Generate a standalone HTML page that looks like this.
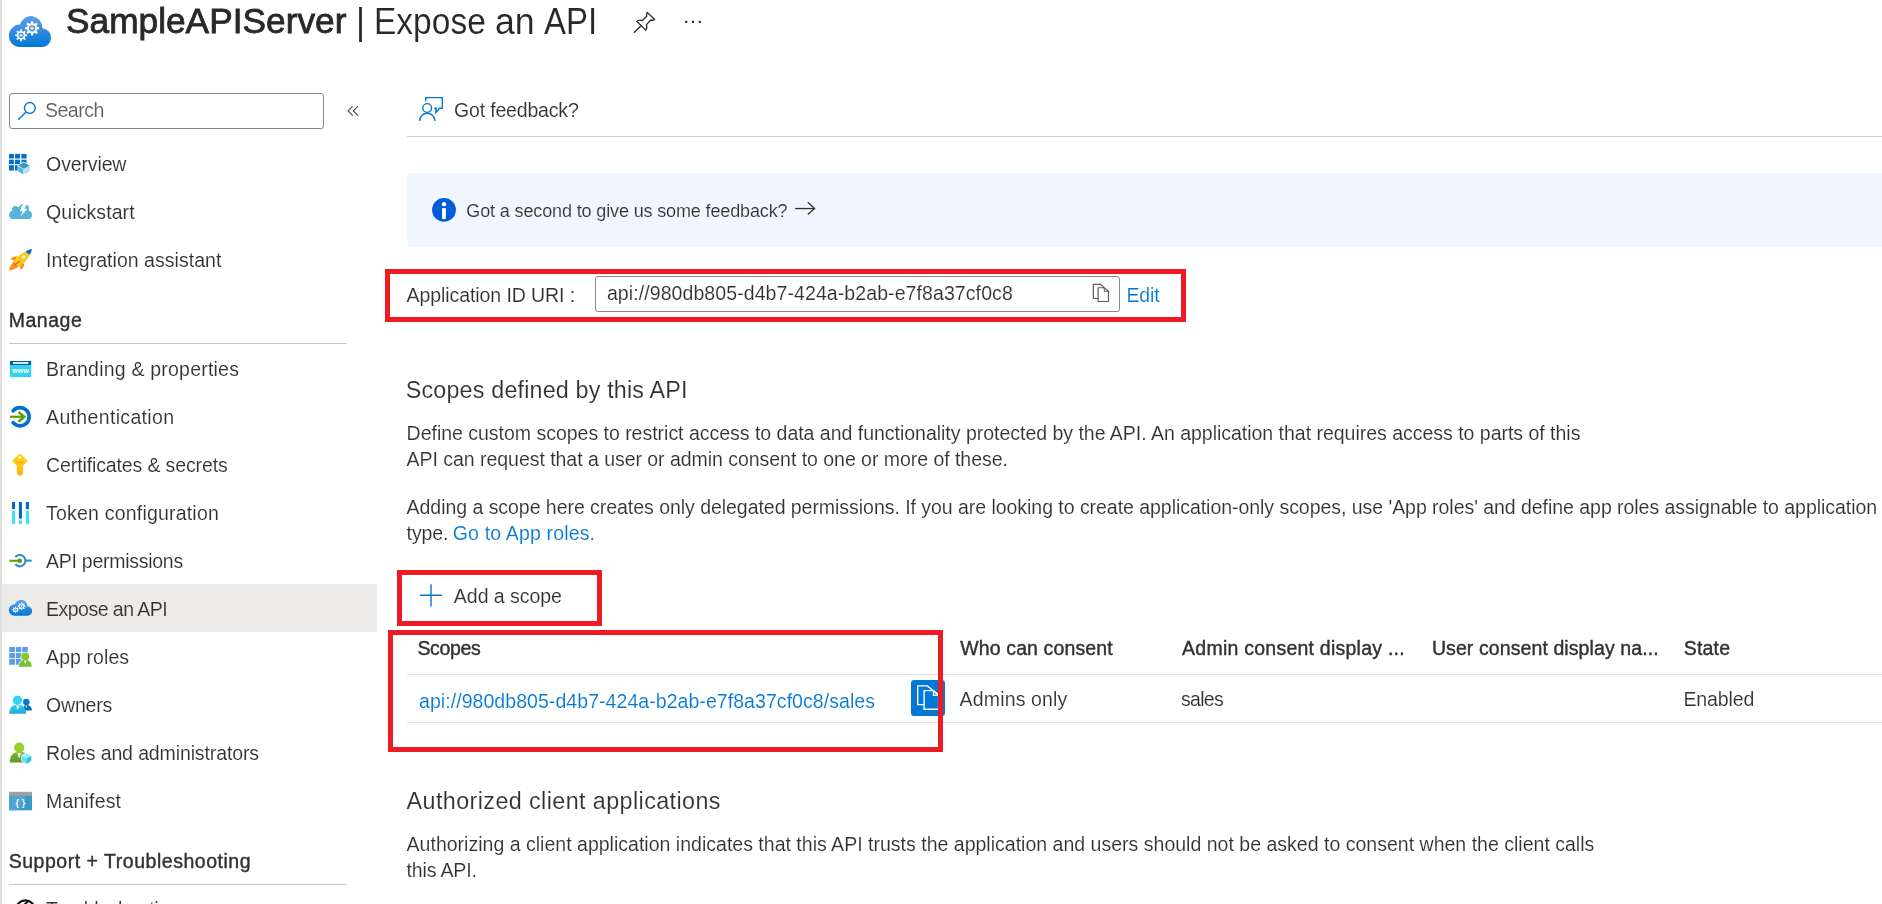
<!DOCTYPE html>
<html lang="en"><head><meta charset="utf-8"><title>SampleAPIServer | Expose an API</title>
<style>
html,body{margin:0;padding:0;background:#fff}
body{width:1882px;height:904px;overflow:hidden;position:relative;font-family:"Liberation Sans",sans-serif}
.t{position:absolute;white-space:nowrap;line-height:1;margin:0;padding:0;-webkit-text-stroke:0.12px #fff}
.sb{-webkit-text-stroke:0.4px currentColor}
.sbt{-webkit-text-stroke:0.8px currentColor}
#bn{-webkit-text-stroke-color:#eff6ff}
#n9{-webkit-text-stroke-color:#edebe9}
.nt{position:absolute;box-sizing:border-box}
svg.nt{overflow:visible}
#tx{position:absolute;left:0;top:0;width:1882px;height:904px;will-change:transform}
</style></head>
<body>
<div class="nt" style="left:0;top:0;width:2px;height:904px;background:#e1dfdd"></div>
<div class="nt" style="left:2px;top:584px;width:375px;height:48px;background:#edebe9"></div>
<div class="nt" style="left:9px;top:93px;width:315px;height:36px;border:1px solid #8a8886;border-radius:3px;background:#fff"></div>
<div class="nt" style="left:9px;top:343px;width:338px;height:1px;background:#c8c6c4"></div>
<div class="nt" style="left:9px;top:884px;width:338px;height:1px;background:#c8c6c4"></div>
<div class="nt" style="left:407px;top:136px;width:1475px;height:1px;background:#d2d0ce"></div>
<div class="nt" style="left:407px;top:173px;width:1480px;height:74px;background:#eff6ff;border-radius:3px"></div>
<div class="nt" style="left:595px;top:276px;width:525px;height:36px;border:1px solid #8a8886;border-radius:3px;background:#fff"></div>
<div class="nt" style="left:407px;top:674px;width:1475px;height:1px;background:#e6e4e2"></div>
<div class="nt" style="left:407px;top:722px;width:1475px;height:1px;background:#e6e4e2"></div>
<div class="nt" style="left:911px;top:680px;width:34px;height:36px;background:#0078d4;border-radius:3px"></div>
<svg class="nt" style="left:0;top:0" width="1882" height="904" viewBox="0 0 1882 904">
<defs><linearGradient id="cg" x1="0" y1="0" x2="0" y2="1"><stop offset="0" stop-color="#5ea0ef"/><stop offset="1" stop-color="#0078d4"/></linearGradient><linearGradient id="yg" x1="0" y1="0" x2="0" y2="1"><stop offset="0" stop-color="#ffd70f"/><stop offset="1" stop-color="#fdb515"/></linearGradient><linearGradient id="gg" x1="0" y1="0" x2="0" y2="1"><stop offset="0" stop-color="#7fba2c"/><stop offset="1" stop-color="#5e9624"/></linearGradient><linearGradient id="og" x1="0" y1="0" x2="0" y2="1"><stop offset="0" stop-color="#32d4f5"/><stop offset="1" stop-color="#1fa7d0"/></linearGradient></defs>
<g transform="translate(9,16) scale(1,1) translate(-9,-16)">
<path fill="url(#cg)" d="M20.2,47 A11.2,11.2 0 0 1 20.05,24.6 A11.3,11.3 0 0 1 42.27,28.22 A9.4,9.4 0 0 1 41.6,47 Z"/>
<path fill="#fff" d="M37.16,27.09 L39.24,27.34 L39.24,29.26 L37.16,29.51 L36.53,31.02 L37.82,32.67 L36.47,34.02 L34.82,32.73 L33.31,33.36 L33.06,35.44 L31.14,35.44 L30.89,33.36 L29.38,32.73 L27.73,34.02 L26.38,32.67 L27.67,31.02 L27.04,29.51 L24.96,29.26 L24.96,27.34 L27.04,27.09 L27.67,25.58 L26.38,23.93 L27.73,22.58 L29.38,23.87 L30.89,23.24 L31.14,21.16 L33.06,21.16 L33.31,23.24 L34.82,23.87 L36.47,22.58 L37.82,23.93 L36.53,25.58Z"/><circle cx="32.1" cy="28.3" r="3.1" fill="#3f8fe6"/><circle cx="32.1" cy="28.3" r="1.8" fill="#e8e4e0"/>
<path fill="#fff" d="M25.28,34.30 L27.05,34.50 L27.05,36.10 L25.28,36.30 L24.77,37.55 L25.87,38.94 L24.74,40.07 L23.35,38.97 L22.10,39.48 L21.90,41.25 L20.30,41.25 L20.10,39.48 L18.85,38.97 L17.46,40.07 L16.33,38.94 L17.43,37.55 L16.92,36.30 L15.15,36.10 L15.15,34.50 L16.92,34.30 L17.43,33.05 L16.33,31.66 L17.46,30.53 L18.85,31.63 L20.10,31.12 L20.30,29.35 L21.90,29.35 L22.10,31.12 L23.35,31.63 L24.74,30.53 L25.87,31.66 L24.77,33.05Z"/><circle cx="21.1" cy="35.3" r="2.6" fill="#3088e2"/><circle cx="21.1" cy="35.3" r="1.5" fill="#e8e4e0"/>
</g>
<g transform="translate(8.8,599.9) scale(0.555,0.513) translate(-9,-16)">
<path fill="url(#cg)" d="M20.2,47 A11.2,11.2 0 0 1 20.05,24.6 A11.3,11.3 0 0 1 42.27,28.22 A9.4,9.4 0 0 1 41.6,47 Z"/>
<path fill="#fff" d="M37.16,27.09 L39.24,27.34 L39.24,29.26 L37.16,29.51 L36.53,31.02 L37.82,32.67 L36.47,34.02 L34.82,32.73 L33.31,33.36 L33.06,35.44 L31.14,35.44 L30.89,33.36 L29.38,32.73 L27.73,34.02 L26.38,32.67 L27.67,31.02 L27.04,29.51 L24.96,29.26 L24.96,27.34 L27.04,27.09 L27.67,25.58 L26.38,23.93 L27.73,22.58 L29.38,23.87 L30.89,23.24 L31.14,21.16 L33.06,21.16 L33.31,23.24 L34.82,23.87 L36.47,22.58 L37.82,23.93 L36.53,25.58Z"/><circle cx="32.1" cy="28.3" r="3.1" fill="#3f8fe6"/><circle cx="32.1" cy="28.3" r="1.8" fill="#e8e4e0"/>
<path fill="#fff" d="M25.28,34.30 L27.05,34.50 L27.05,36.10 L25.28,36.30 L24.77,37.55 L25.87,38.94 L24.74,40.07 L23.35,38.97 L22.10,39.48 L21.90,41.25 L20.30,41.25 L20.10,39.48 L18.85,38.97 L17.46,40.07 L16.33,38.94 L17.43,37.55 L16.92,36.30 L15.15,36.10 L15.15,34.50 L16.92,34.30 L17.43,33.05 L16.33,31.66 L17.46,30.53 L18.85,31.63 L20.10,31.12 L20.30,29.35 L21.90,29.35 L22.10,31.12 L23.35,31.63 L24.74,30.53 L25.87,31.66 L24.77,33.05Z"/><circle cx="21.1" cy="35.3" r="2.6" fill="#3088e2"/><circle cx="21.1" cy="35.3" r="1.5" fill="#e8e4e0"/>
</g>
<g fill="none" stroke="#323130" stroke-width="1.35" stroke-linejoin="miter"><path d="M634.0,32.7 L641.0,25.8"/><path d="M636.9,21.5 C638.4,19.6 640.6,19.9 642.4,20.5 L646.7,16.2 C646.3,14.6 646.6,13.4 647.4,12.4 L654.6,19.4 C653.6,20.3 652.3,20.5 650.8,20.0 L646.5,24.6 C647.1,26.6 646.9,28.6 645.8,30.2 Z"/></g>
<rect x="685.1" y="20.8" width="2.2" height="2.2" fill="#323130"/>
<rect x="691.9" y="20.8" width="2.2" height="2.2" fill="#323130"/>
<rect x="698.7" y="20.8" width="2.2" height="2.2" fill="#323130"/>
<g fill="none" stroke="#0078d4" stroke-width="1.4" stroke-linecap="round"><circle cx="29.85" cy="108" r="5.45"/><path d="M18.5,119.5 L25.6,112.4"/></g>
<g fill="none" stroke="#484644" stroke-width="1.1"><path d="M352.6,106.1 L348.1,110.9 L352.8,115.7"/><path d="M358.1,106.1 L353.3,110.9 L358.1,115.7"/></g>
<rect x="9.0" y="153.9" width="4.9" height="4.6" fill="#0072c6"/>
<rect x="9.0" y="159.7" width="4.9" height="4.4" fill="#0072c6"/>
<rect x="9.0" y="165.2" width="4.9" height="5.4" fill="#0072c6"/>
<rect x="15.0" y="153.9" width="5.0" height="4.6" fill="#0072c6"/>
<rect x="15.0" y="159.7" width="5.0" height="4.4" fill="#0072c6"/>
<rect x="15.0" y="165.2" width="5.0" height="5.4" fill="#0072c6"/>
<rect x="21.4" y="153.9" width="5.2" height="4.6" fill="#0072c6"/>
<rect x="21.4" y="159.7" width="5.2" height="4.4" fill="#0072c6"/>
<rect x="21.4" y="165.2" width="5.2" height="5.4" fill="#0072c6"/>
<path d="M23.8,161.6 L30.4,165.4 L30.4,171.8 L23.8,175.3 L17.6,171.8 L17.6,165.1 Z" fill="#fff"/>
<path d="M23.8,162.3 L29.7,165.7 L23.8,168.9 L18.2,165.5 Z" fill="#3999c6"/>
<path d="M18.2,166.2 L23.4,169.3 L23.4,174.3 L18.2,171.4 Z" fill="#59b4d9"/>
<path d="M24.3,169.3 L29.7,166.3 L29.7,171.4 L24.3,174.3 Z" fill="#b3dcec"/>
<g transform="translate(4,196)"><path fill="#59b4d9" d="M8.6,23 C6.4,23 5.1,21 5.1,18.9 C5.1,16.6 6.6,15.1 8.2,14.8 C7.6,12 9,9.9 11.3,9.9 C12.6,9.9 13.7,10.5 14.3,11.4 L17.7,8.0 L18.5,8.3 L16.1,14.9 L18.8,15.2 L16.1,20.9 L23,13.1 L20.3,12.4 L22.6,8.8 C24.2,9.4 25.1,11 24.9,12.6 L24.8,14.6 C26.7,14.9 28,16.7 28,18.9 C28,21.2 26.6,23 24.6,23 Z"/></g>
<g transform="translate(4,244)"><path fill="#f7901e" d="M10.0,17.3 C7.5,19.5 5.6,23.2 5.1,26.7 C8.9,26.1 12.6,24.4 15.0,22.0 Z"/><path fill="#f7901e" d="M13.4,12.6 C10.6,12.0 8.0,13.2 6.1,15.2 C7.6,15.6 9.6,16.3 10.8,17.2 Z"/><path fill="#f7901e" d="M19.9,18.9 C20.6,21.5 19.3,24.3 16.6,25.9 C16.5,24.4 16.0,23.0 15.2,22.0 Z"/><path fill="#fcc913" d="M10.3,17.2 C12.5,13.0 17.2,9.3 21.6,7.4 L25.5,11.0 C23.6,15.5 19.6,20.0 15.2,22.0 Z"/><path fill="#0072c6" d="M21.6,7.4 L25.5,11.0 C26.8,9.2 27.7,7.2 28.0,5.0 C25.6,5.4 23.4,6.2 21.6,7.4 Z"/><path fill="#7fba00" d="M26.4,5.4 L28.0,5.0 L27.7,6.6 Z"/><circle cx="19.6" cy="12.9" r="1.6" fill="#f3f6fb"/><path d="M10.3,21.6 L15.6,17.0" stroke="#e0600a" stroke-width="1.1" fill="none"/></g>
<rect x="10" y="361" width="21.1" height="16.1" fill="#32d2f2"/><rect x="10" y="361" width="21.1" height="4" fill="#005ba1"/><rect x="12.85" y="362.15" width="15.5" height="1.7" fill="#ffffff"/>
<text x="20.4" y="372.9" font-family="Liberation Sans, sans-serif" font-weight="bold" font-size="7.3" fill="#fff" text-anchor="middle" textLength="16.6" lengthAdjust="spacingAndGlyphs">www</text>
<path d="M13.1,410.9 A9.1,9.1 0 1 1 13.1,422.6" fill="none" stroke="#0072c6" stroke-width="3.6" stroke-linecap="round"/>
<path d="M10,416.75 L23.5,416.75" stroke="#57a300" stroke-width="2.2" fill="none"/><path d="M18.4,411.9 L24.2,416.75 L18.4,421.7" stroke="#57a300" stroke-width="2.5" fill="none"/>
<g transform="translate(4,449)"><path fill="url(#yg)" d="M15.9,5.0 C16.5,5.0 17.0,5.3 17.5,5.8 L22.7,10.8 C23.4,11.5 23.4,12.4 22.7,13.1 L18.8,16.9 L18.8,18.6 L19.2,19.0 L19.2,19.9 L18.8,20.3 L18.8,20.9 L19.2,21.3 L19.2,22.2 L18.8,22.6 L18.8,23.3 L19.2,23.7 L19.2,24.5 L16.4,27.1 L15.4,27.1 L12.9,24.8 L12.9,16.9 L9.1,13.1 C8.4,12.4 8.4,11.5 9.1,10.8 L14.3,5.8 C14.8,5.3 15.3,5.0 15.9,5.0 Z"/><circle cx="15.9" cy="8.3" r="1.35" fill="#fff"/><rect x="12.4" y="12.7" width="7.1" height="1.2" fill="#ffa400"/></g>
<rect x="12" y="502" width="3.05" height="7.1" fill="#0068c7"/><rect x="11.4" y="509.1" width="4.2" height="1.8" fill="#e4e6e8"/><rect x="12" y="510.9" width="3.05" height="13" fill="#3be0ff"/>
<rect x="25.9" y="502" width="3.05" height="7.1" fill="#0068c7"/><rect x="25.299999999999997" y="509.1" width="4.2" height="1.8" fill="#e4e6e8"/><rect x="25.9" y="510.9" width="3.05" height="13" fill="#3be0ff"/>
<rect x="18.9" y="502" width="3.05" height="16.8" fill="#0068c7"/><rect x="18.3" y="518.7" width="4.2" height="1.8" fill="#e4e6e8"/><rect x="18.9" y="520.4" width="3.05" height="3.5" fill="#3be0ff"/>
<path d="M15.3,557.1 A5.7,5.7 0 1 1 15.3,564.2" fill="none" stroke="#2b90c9" stroke-width="2.1"/><path d="M25.2,560.6 L31.8,560.6" stroke="#2b90c9" stroke-width="2.1"/>
<path d="M9.3,560.75 L19.6,560.75" stroke="#57a300" stroke-width="2.1"/><circle cx="19.75" cy="560.75" r="2.35" fill="#57a300"/>
<rect x="9.2" y="647.1" width="5.8" height="4.8" rx="0.5" fill="#5a9cee"/>
<rect x="9.2" y="652.9" width="5.8" height="5.0" rx="0.5" fill="#5a9cee"/>
<rect x="9.2" y="658.8" width="5.8" height="6.0" rx="0.5" fill="#5a9cee"/>
<rect x="15.9" y="647.1" width="5.3" height="4.8" rx="0.5" fill="#5a9cee"/>
<rect x="15.9" y="652.9" width="5.3" height="5.0" rx="0.5" fill="#5a9cee"/>
<rect x="15.9" y="658.8" width="5.3" height="6.0" rx="0.5" fill="#5a9cee"/>
<rect x="22.2" y="647.1" width="5.6" height="4.8" rx="0.5" fill="#5a9cee"/>
<rect x="22.2" y="652.9" width="5.6" height="5.0" rx="0.5" fill="#5a9cee"/>
<rect x="22.2" y="658.8" width="5.6" height="6.0" rx="0.5" fill="#5a9cee"/>
<circle cx="25.2" cy="656.4" r="4.6" fill="#fff"/><path d="M17.9,667.3 C17.9,662.5 21,659.2 25.2,659.2 C29.5,659.2 32.5,662.5 32.5,667.3 Z" fill="#fff"/>
<circle cx="25.2" cy="656.4" r="3.9" fill="#7fcc28"/><path d="M18.7,666.8 C18.7,662.8 21.5,659.9 23.4,659.9 L27.0,659.9 C29,659.9 31.8,662.8 31.8,666.8 Z" fill="#76c22b"/><path d="M23.8,660.6 L26.65,660.6 L25.2,664.0 Z" fill="#fff"/>
<circle cx="26.3" cy="701.9" r="3.25" fill="#0078d4"/><path d="M23.1,710.6 C23.1,707.6 24.4,704.9 25.6,704.9 L27.2,704.9 C29.6,704.9 32,707.4 32,710.6 Z" fill="#0a6cd1"/><path d="M25.2,705.5 L27.4,705.5 L26.3,708.1 Z" fill="#cfe6f7"/>
<circle cx="17.45" cy="700.3" r="4.65" fill="#32d4f5"/><path d="M9.1,713.8 C9.1,709 12,704.9 15.0,704.9 L20.4,704.9 C23.4,704.9 26.1,709 26.1,713.8 Z" fill="url(#og)"/><path d="M15.9,705.5 L19.6,705.5 L17.7,710.2 Z" fill="#d9f3fb"/>
<circle cx="19.2" cy="747.6" r="5.1" fill="#94d02e"/><path d="M9.7,762.5 C9.7,757.5 12.5,752.2 16.3,752.2 L22.2,752.2 C24.5,752.2 26.7,754 26.7,757 L26.7,762.5 Z" fill="url(#gg)"/><path d="M17.3,752.9 L21.0,752.9 L19.2,758.6 Z" fill="#fff"/>
<path d="M26.65,752.4 L32.0,755.5 L32.0,760.9 L26.65,764.6 L21.4,760.9 L21.4,755.5 Z" fill="#fff"/>
<path d="M26.65,753.1 L31.4,755.9 L26.65,758.6 L22.05,755.9 Z" fill="#9cebff"/><path d="M22.05,755.9 L26.65,758.6 L26.65,763.9 L22.05,760.5 Z" fill="#50e6ff"/><path d="M31.4,755.9 L26.65,758.6 L26.65,763.9 L31.4,760.5 Z" fill="#32bedd"/>
<rect x="9.1" y="791.9" width="22.9" height="18.4" fill="#3999c6"/><path d="M9.1,795.8 L26,795.8 L18.5,810.3 L9.1,810.3 Z" fill="#4fa6d1"/><rect x="9.1" y="791.9" width="22.9" height="3.9" fill="#a0a1a2"/>
<text x="20.3" y="806.3" font-family="Liberation Sans, sans-serif" font-weight="bold" font-size="9" fill="#fff" text-anchor="middle" textLength="9.8" lengthAdjust="spacing">{ }</text>
<g fill="none" stroke="#111" stroke-width="2.2"><circle cx="25.4" cy="909.6" r="9.2"/><path d="M20.5,908.5 L28.5,900.8"/></g>
<g fill="none" stroke="#0078d4" stroke-width="1.4"><circle cx="427.2" cy="108" r="4.4"/><path d="M419.6,120.9 A7.65,7.65 0 0 1 434.9,120.9"/><path d="M425.7,101.2 L425.7,97.6 L442.3,97.6 L442.3,108.2 L439.6,108.2 L435.8,112.5 L436.2,108.2 L434.1,108.2" stroke-linejoin="miter"/></g>
<circle cx="444" cy="209.9" r="12.3" fill="#fff" opacity="0.7"/><circle cx="444" cy="209.9" r="11.9" fill="#015cda"/><circle cx="444" cy="204.15" r="2.2" fill="#fff"/><rect x="442" y="208.1" width="3.9" height="11" fill="#fff"/>
<g fill="none" stroke="#323130" stroke-width="1.3"><path d="M795.1,208.55 L814.4,208.55"/><path d="M807.8,202.3 L814.6,208.55 L807.8,214.6"/></g>
<g fill="none" stroke="#605e5c" stroke-width="1.2"><path d="M1098.1,298.5 L1093.35,298.5 L1093.35,284.4 L1100.7,284.4 L1104.3,287.75"/><path d="M1098.1,287.75 L1104.3,287.75 L1108.5,291.3 L1108.5,301.5 L1098.1,301.5 Z"/><path d="M1104.3,287.75 L1104.3,291.3 L1108.5,291.3" stroke-width="1"/></g>
<g fill="none" stroke="#fff" stroke-width="1.4"><path d="M924.1,704.6 L917.7,704.6 L917.7,685.9 L927.4,685.9 L938.6,694.9"/><path d="M924.1,690.6 L933.5,690.6 L938.6,695.2 L938.6,709.2 L924.1,709.2 Z"/><path d="M933.5,690.6 L933.5,695.2 L938.6,695.2"/></g>
<path d="M420,595.3 L442,595.3 M431,584.2 L431,606.4" stroke="#0078d4" stroke-width="1.4" fill="none"/>
</svg>
<div class="nt" style="left:385px;top:269px;width:801px;height:53px;border:5px solid #ed1c24"></div>
<div class="nt" style="left:397px;top:570px;width:205px;height:56px;border:5px solid #ed1c24"></div>
<div class="nt" style="left:388px;top:630px;width:555px;height:122px;border:5px solid #ed1c24"></div>

<div id="tx">
<div class="t sbt" id="ttl1" style="left:65.72px;top:4.00px;font-size:35.6px;color:#292827;letter-spacing:0.000px;transform:scaleX(0.9916);transform-origin:0 0">SampleAPIServer</div>
<div class="t" id="ttl2" style="left:355.83px;top:4.00px;font-size:36.6px;color:#292827;letter-spacing:0.000px">|</div>
<div class="t" id="ttl3" style="left:374.18px;top:4.00px;font-size:36.6px;color:#292827;letter-spacing:0.000px;transform:scaleX(0.9163);transform-origin:0 0">Expose</div>
<div class="t" id="ttl4" style="left:494.60px;top:4.00px;font-size:36.6px;color:#292827;letter-spacing:0.000px;transform:scaleX(0.9757);transform-origin:0 0">an</div>
<div class="t" id="ttl5" style="left:544.31px;top:4.00px;font-size:36.6px;color:#292827;letter-spacing:0.000px;transform:scaleX(0.9027);transform-origin:0 0">API</div>
<div class="t" id="srch" style="left:44.91px;top:101.00px;font-size:19.5px;color:#605e5c;letter-spacing:-0.456px">Search</div>
<div class="t" id="n1" style="left:46.10px;top:155.00px;font-size:19.5px;color:#323130;letter-spacing:-0.133px">Overview</div>
<div class="t" id="n2" style="left:46.10px;top:203.00px;font-size:19.5px;color:#323130;letter-spacing:0.076px">Quickstart</div>
<div class="t" id="n3" style="left:46.10px;top:251.00px;font-size:19.5px;color:#323130;letter-spacing:0.038px">Integration assistant</div>
<div class="t sb" id="mng" style="left:8.70px;top:311.00px;font-size:19.5px;color:#323130;letter-spacing:0.516px">Manage</div>
<div class="t" id="n4" style="left:46.10px;top:360.00px;font-size:19.5px;color:#323130;letter-spacing:0.210px">Branding &amp; properties</div>
<div class="t" id="n5" style="left:46.10px;top:408.00px;font-size:19.5px;color:#323130;letter-spacing:0.337px">Authentication</div>
<div class="t" id="n6" style="left:46.10px;top:456.00px;font-size:19.5px;color:#323130;letter-spacing:-0.123px">Certificates &amp; secrets</div>
<div class="t" id="n7" style="left:46.10px;top:504.00px;font-size:19.5px;color:#323130;letter-spacing:0.198px">Token configuration</div>
<div class="t" id="n8" style="left:46.10px;top:552.00px;font-size:19.5px;color:#323130;letter-spacing:-0.270px">API permissions</div>
<div class="t" id="n9" style="left:46.10px;top:600.00px;font-size:19.5px;color:#323130;letter-spacing:-0.527px">Expose an API</div>
<div class="t" id="n10" style="left:46.10px;top:648.00px;font-size:19.5px;color:#323130;letter-spacing:0.077px">App roles</div>
<div class="t" id="n11" style="left:46.10px;top:696.00px;font-size:19.5px;color:#323130;letter-spacing:-0.226px">Owners</div>
<div class="t" id="n12" style="left:46.10px;top:744.00px;font-size:19.5px;color:#323130;letter-spacing:-0.118px">Roles and administrators</div>
<div class="t" id="n13" style="left:46.10px;top:792.00px;font-size:19.5px;color:#323130;letter-spacing:0.175px">Manifest</div>
<div class="t sb" id="sup" style="left:8.70px;top:852.00px;font-size:19.5px;color:#323130;letter-spacing:0.525px">Support + Troubleshooting</div>
<div class="t" id="n14" style="left:46.10px;top:900.00px;font-size:19.5px;color:#323130;letter-spacing:-0.404px">Troubleshooting</div>
<div class="t" id="fb" style="left:453.99px;top:101.00px;font-size:19.5px;color:#323130;letter-spacing:-0.174px">Got feedback?</div>
<div class="t" id="bn" style="left:466.34px;top:202.00px;font-size:18px;color:#323130;letter-spacing:-0.133px">Got a second to give us some feedback?</div>
<div class="t" id="lbl" style="left:406.60px;top:286.00px;font-size:19.5px;color:#323130;letter-spacing:-0.084px">Application ID URI :</div>
<div class="t" id="uri" style="left:606.90px;top:284.00px;font-size:19.5px;color:#323130;letter-spacing:0.088px">api://980db805-d4b7-424a-b2ab-e7f8a37cf0c8</div>
<div class="t" id="edit" style="left:1126.47px;top:286.00px;font-size:19.5px;color:#0078d4;letter-spacing:-0.170px">Edit</div>
<div class="t" id="h1" style="left:405.81px;top:379.00px;font-size:23.3px;color:#323130;letter-spacing:0.181px">Scopes defined by this API</div>
<div class="t" id="p1a" style="left:406.60px;top:424.00px;font-size:19.5px;color:#323130;letter-spacing:-0.016px">Define custom scopes to restrict access to data and functionality protected by the API. An application that requires access to parts of this</div>
<div class="t" id="p1b" style="left:406.60px;top:450.00px;font-size:19.5px;color:#323130;letter-spacing:-0.036px">API can request that a user or admin consent to one or more of these.</div>
<div class="t" id="p2a" style="left:406.60px;top:498.00px;font-size:19.5px;color:#323130;letter-spacing:-0.040px">Adding a scope here creates only delegated permissions. If you are looking to create application-only scopes, use 'App roles' and define app roles assignable to application</div>
<div class="t" id="p2b" style="left:406.60px;top:524.00px;font-size:19.5px;color:#323130;letter-spacing:-0.108px">type.</div>
<div class="t" id="p2c" style="left:452.72px;top:524.00px;font-size:19.5px;color:#0078d4;letter-spacing:0.164px">Go to App roles.</div>
<div class="t" id="add" style="left:453.85px;top:587.00px;font-size:19.5px;color:#323130;letter-spacing:-0.035px">Add a scope</div>
<div class="t sb" id="th1" style="left:417.39px;top:639.00px;font-size:19.5px;color:#323130;letter-spacing:-0.341px">Scopes</div>
<div class="t" id="td1" style="left:419.01px;top:692.00px;font-size:19.5px;color:#0078d4;letter-spacing:0.059px">api://980db805-d4b7-424a-b2ab-e7f8a37cf0c8/sales</div>
<div class="t sb" id="th2" style="left:960.24px;top:639.00px;font-size:19.5px;color:#323130;letter-spacing:0.126px">Who can consent</div>
<div class="t" id="td2" style="left:959.61px;top:690.00px;font-size:19.5px;color:#323130;letter-spacing:0.151px">Admins only</div>
<div class="t sb" id="th3" style="left:1182.10px;top:639.00px;font-size:19.5px;color:#323130;letter-spacing:0.241px">Admin consent display ...</div>
<div class="t" id="td3" style="left:1180.96px;top:690.00px;font-size:19.5px;color:#323130;letter-spacing:-0.696px">sales</div>
<div class="t sb" id="th4" style="left:1431.89px;top:639.00px;font-size:19.5px;color:#323130;letter-spacing:0.094px">User consent display na...</div>
<div class="t sb" id="th5" style="left:1683.75px;top:639.00px;font-size:19.5px;color:#323130;letter-spacing:0.185px">State</div>
<div class="t" id="td5" style="left:1683.47px;top:690.00px;font-size:19.5px;color:#323130;letter-spacing:-0.135px">Enabled</div>
<div class="t" id="h2" style="left:406.60px;top:790.00px;font-size:23.3px;color:#323130;letter-spacing:0.419px">Authorized client applications</div>
<div class="t" id="apa" style="left:406.60px;top:835.00px;font-size:19.5px;color:#323130;letter-spacing:0.013px">Authorizing a client application indicates that this API trusts the application and users should not be asked to consent when the client calls</div>
<div class="t" id="apb" style="left:406.60px;top:861.00px;font-size:19.5px;color:#323130;letter-spacing:-0.156px">this API.</div>
</div>
</body></html>
